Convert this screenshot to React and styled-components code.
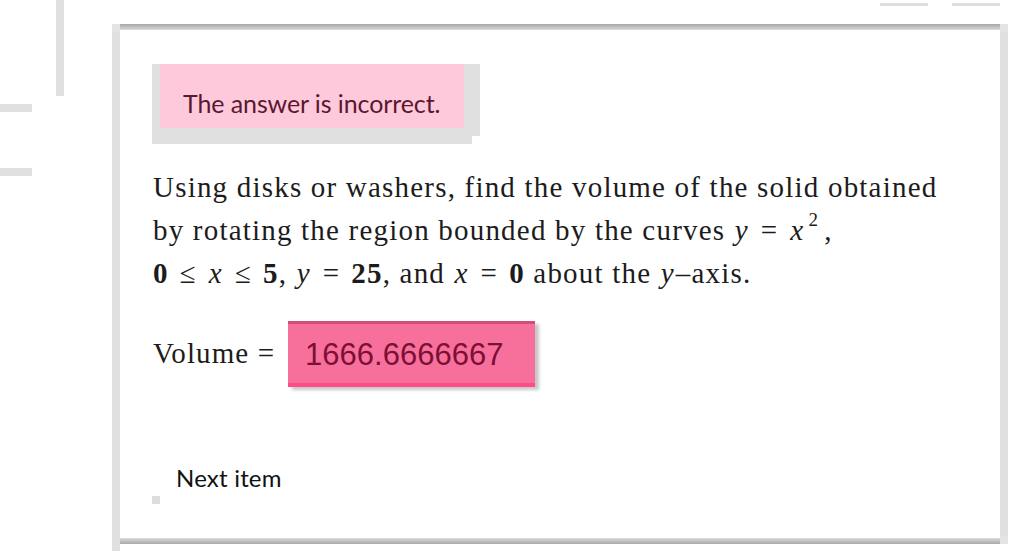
import React from "react";
import styled, { createGlobalStyle } from "styled-components";

const GlobalStyle = createGlobalStyle`
  html, body {
    margin: 0;
    padding: 0;
    background: #ffffff;
    overflow: hidden;
  }
  body {
    font-family: "Liberation Serif", "Times New Roman", serif;
  }
`;

const Page = styled.div`
  display: grid;
  grid-template-columns: 112px 896px;
  height: 551px;
`;

const Side = styled.div`
  display: flex;
  flex-direction: column;
`;

const SideBar = styled.div`
  width: 8px;
  height: 96px;
  margin-left: 56px;
  background: #e0e0e0;
`;

const SideRule = styled.div`
  width: 32px;
  height: 8px;
  margin-top: ${(p) => p.$gap}px;
  background: #e0e0e0;
`;

const Main = styled.div`
  display: flex;
  flex-direction: column;
`;

const TopStrip = styled.div`
  height: 24px;
  display: flex;
  justify-content: flex-end;
  gap: 24px;
  padding-right: 8px;
`;

const StripLine = styled.div`
  width: 48px;
  height: 3px;
  margin-top: 3px;
  background: #dddddd;
`;

const Card = styled.div`
  display: flex;
  flex-direction: column;
  flex: 1;
`;

const Edge = styled.div`
  display: flex;
  height: ${(p) => p.$h}px;
  align-items: ${(p) => (p.$bottom ? "flex-end" : "flex-start")};
`;

const Corner = styled.div`
  width: 8px;
  height: 8px;
  background: #e4e4e4;
  flex-shrink: 0;
`;

const SideFill = styled.div`
  width: 8px;
  align-self: stretch;
  background: #e0e0e0;
  flex-shrink: 0;
`;

const Rule = styled.div`
  flex: 1;
  height: 6px;
  background: ${(p) =>
    p.$bottom
      ? "linear-gradient(#dcdcdc, #a9a9a9)"
      : "linear-gradient(#a6a6a6, #dadada)"};
`;

const Body = styled.div`
  flex: 1;
  border-left: 8px solid #e0e0e0;
  border-right: 8px solid #e0e0e0;
  padding: 32px 0 0 32px;
  display: flex;
  flex-direction: column;
  align-items: flex-start;
`;

const Tail = styled.div`
  height: 7px;
  width: 8px;
  background: #e0e0e0;
`;

const AlertShadow = styled.div`
  background: #e0e0e0;
  padding: 0 16px 16px 8px;
  clip-path: polygon(
    0 0,
    100% 0,
    100% calc(100% - 8px),
    calc(100% - 8px) calc(100% - 8px),
    calc(100% - 8px) 100%,
    0 100%
  );
`;

const Alert = styled.div`
  width: 304px;
  height: 64px;
  box-sizing: border-box;
  padding: 13px 0 0 23px;
  background: #ffc9dc;
  color: #5a1830;
  font-family: Lato, "Open Sans", sans-serif;
  font-size: 25px;
  letter-spacing: -0.1px;
  line-height: 52px;
  white-space: nowrap;
`;

const Question = styled.p`
  margin: 22px 0 0 1px;
  font-size: 29px;
  letter-spacing: 1.2px;
  line-height: 43px;
  color: #1c1c1c;
  white-space: nowrap;
`;

const V = styled.i`
  font-style: italic;
  padding: 0 1px;
`;

const N = styled.span`
  font-weight: 700;
`;

const Op = styled.span`
  margin: 0 11px;
`;

const Sup = styled.sup`
  font-size: 19px;
  line-height: 0;
  vertical-align: 14px;
  margin: 0 5px 0 3px;
`;

const AnswerRow = styled.div`
  margin-top: 26px;
  display: flex;
  align-items: flex-start;
  gap: 13px;
`;

const Label = styled.span`
  margin: 16px 0 0 1px;
  font-size: 29px;
  letter-spacing: 1.1px;
  line-height: 32px;
  color: #1c1c1c;
  white-space: nowrap;
`;

const AnswerBox = styled.div`
  width: 247px;
  height: 66px;
  box-sizing: border-box;
  padding: 3px 0 0 17px;
  background: #f7709b;
  border-top: 3px solid #d24d7c;
  border-bottom: 4px solid #ff4a8c;
  box-shadow: 4px 3px 3px rgba(0, 0, 0, 0.22);
  color: #7c0f36;
  font-family: "Liberation Sans", Arial, sans-serif;
  font-size: 31px;
  line-height: 56px;
`;

const NextButton = styled.button`
  margin-top: 76px;
  padding: 0 0 0 24px;
  border: none;
  background: none;
  font-family: Lato, "Open Sans", sans-serif;
  font-size: 24px;
  letter-spacing: 0.2px;
  line-height: 30px;
  color: #111111;
  cursor: pointer;
`;

const FocusDot = styled.div`
  width: 8px;
  height: 8px;
  margin-top: 3px;
  background: #dddddd;
`;

export default function App() {
  return (
    <>
      <GlobalStyle />
      <Page>
        <Side>
          <SideBar />
          <SideRule $gap={8} />
          <SideRule $gap={56} />
        </Side>
        <Main>
          <TopStrip>
            <StripLine />
            <StripLine />
          </TopStrip>
          <Card>
            <Edge $h={8}>
              <Corner />
              <Rule />
              <Corner />
            </Edge>
            <Body>
              <AlertShadow>
                <Alert>The answer is incorrect.</Alert>
              </AlertShadow>
              <Question>
                Using disks or washers, find the volume of the solid obtained
                <br />
                by rotating the region bounded by the curves <V>y</V>
                <Op>=</Op>
                <V>x</V>
                <Sup>2</Sup>,
                <br />
                <N>0</N>
                <Op>≤</Op>
                <V>x</V>
                <Op>≤</Op>
                <N>5</N>, <V>y</V>
                <Op>=</Op>
                <N>25</N>, and <V>x</V>
                <Op>=</Op>
                <N>0</N> about the <V>y</V>–axis.
              </Question>
              <AnswerRow>
                <Label>Volume =</Label>
                <AnswerBox>1666.6666667</AnswerBox>
              </AnswerRow>
              <NextButton>Next item</NextButton>
              <FocusDot />
            </Body>
            <Edge $h={6} $bottom>
              <SideFill />
              <Rule $bottom />
              <Corner />
            </Edge>
            <Tail />
          </Card>
        </Main>
      </Page>
    </>
  );
}
